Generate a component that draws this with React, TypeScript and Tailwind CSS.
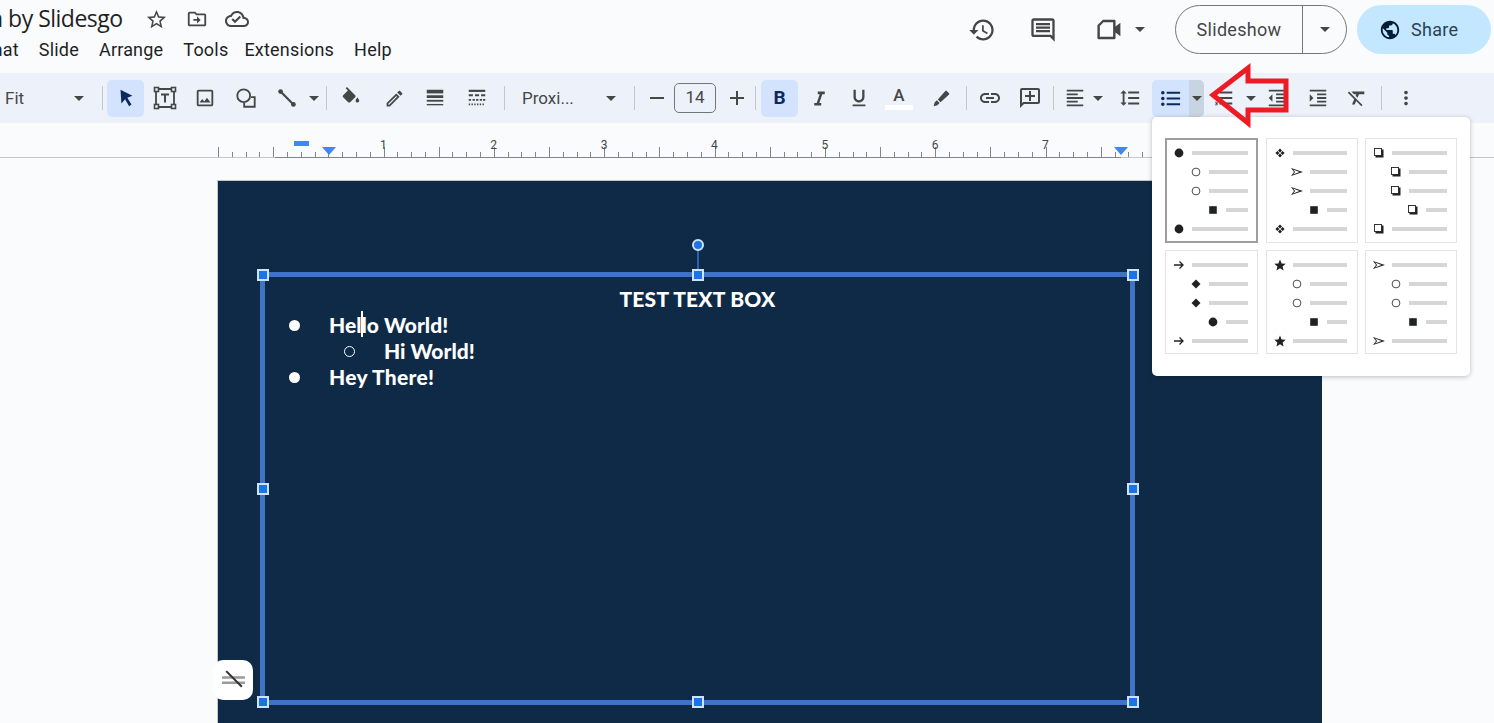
import { ReactNode } from 'react';

const ui = 'font-["Roboto",sans-serif]';

function Icon({ d, size = 22, className = '' }: { d: string; size?: number; className?: string }) {
  return (
    <svg viewBox="0 0 24 24" width={size} height={size} fill="currentColor" className={className}>
      <path d={d} />
    </svg>
  );
}

function Caret() {
  return <div className="w-0 h-0 border-l-[5px] border-r-[5px] border-t-[5px] border-l-transparent border-r-transparent border-t-[#444746]" />;
}

function Sep() {
  return <div className="w-px h-6 bg-[#c7c7c7] shrink-0" />;
}

function Tool({ className, children }: { className: string; children: ReactNode }) {
  return <div className={`h-[37px] flex items-center justify-center shrink-0 text-[#444746] ${className}`}>{children}</div>;
}

const paths = {
  image: 'M19 5v14H5V5h14m0-2H5c-1.1 0-2 .9-2 2v14c0 1.1.9 2 2 2h14c1.1 0 2-.9 2-2V5c0-1.1-.9-2-2-2zm-4.86 8.86l-3 3.87L9 13.14 6 17h12l-3.86-5.14z',
  fill: 'M16.56 8.94L7.62 0 6.21 1.41l2.38 2.38-5.15 5.15c-.59.59-.59 1.54 0 2.12l5.5 5.5c.29.29.68.44 1.06.44s.77-.15 1.06-.44l5.5-5.5c.59-.58.59-1.53 0-2.12zM19 11.5s-2 2.17-2 3.5c0 1.1.9 2 2 2s2-.9 2-2c0-1.33-2-3.5-2-3.5z',
  pencil: 'M14.06 9.02l.92.92L5.92 19H5v-.92l9.06-9.06M17.66 3c-.25 0-.51.1-.7.29l-1.83 1.83 3.75 3.75 1.83-1.83c.39-.39.39-1.02 0-1.41l-2.34-2.34c-.2-.2-.45-.29-.71-.29zm-3.6 3.19L3 17.25V21h3.75L17.81 9.94l-3.75-3.75z',
  italic: 'M10 4v3h2.21l-3.42 10H6v3h8v-3h-2.21l3.42-10H18V4z',
  underline: 'M12 17c3.31 0 6-2.69 6-6V3h-2.5v8c0 1.93-1.57 3.5-3.5 3.5S8.5 12.93 8.5 11V3H6v8c0 3.31 2.69 6 6 6zm-7 2v2h14v-2H5z',
  highlight: 'M4 21l1-4 2.5-2.5 3 3L8 20l-4 1zM8.5 13.5l8-9c.6-.6 1.5-.6 2 0l2 2c.6.5.6 1.4 0 2l-9 8-3-3z',
  link: 'M3.9 12c0-1.71 1.39-3.1 3.1-3.1h4V7H7c-2.76 0-5 2.24-5 5s2.24 5 5 5h4v-1.9H7c-1.71 0-3.1-1.39-3.1-3.1zM8 13h8v-2H8v2zm9-6h-4v1.9h4c1.71 0 3.1 1.39 3.1 3.1s-1.39 3.1-3.1 3.1h-4V17h4c2.76 0 5-2.24 5-5s-2.24-5-5-5z',
  addComment: 'M2 4c0-1.1.9-2 2-2h16c1.1 0 2 .9 2 2v12c0 1.1-.9 2-2 2H6l-4 4V4zm2 0v13.17L5.17 16H20V4H4zm7 1h2v4h4v2h-4v4h-2v-4H7V9h4V5z',
  align: 'M15 15H3v2h12v-2zm0-8H3v2h12V7zM3 13h18v-2H3v2zm0 8h18v-2H3v2zM3 3v2h18V3H3z',
  spacing: 'M6 7h2.5L5 3.5 1.5 7H4v10H1.5L5 20.5 8.5 17H6V7zm4-2v2h12V5H10zm0 14h12v-2H10v2zm0-6h12v-2H10v2z',
  bullets: 'M4 10.2c-1 0-1.8.8-1.8 1.8s.8 1.8 1.8 1.8 1.8-.8 1.8-1.8-.8-1.8-1.8-1.8zm0-6c-1 0-1.8.8-1.8 1.8S3 7.8 4 7.8 5.8 7 5.8 6 5 4.2 4 4.2zm0 12c-1 0-1.8.8-1.8 1.8s.8 1.8 1.8 1.8 1.8-.8 1.8-1.8-.8-1.8-1.8-1.8zM8 19h14v-2H8v2zm0-6h14v-2H8v2zm0-8v2h14V5H8z',
  numbered: 'M2 17h2v.5H3v1h1v.5H2v1h3v-4H2v1zm1-9h1V4H2v1h1v3zm-1 3h1.8L2 13.1v.9h3v-1H3.2L5 10.9V10H2v1zm5-6v2h14V5H7zm0 14h14v-2H7v2zm0-6h14v-2H7v2z',
  outdent: 'M11 17h10v-2H11v2zm-8-5l4 4V8l-4 4zm0 9h18v-2H3v2zM3 3v2h18V3H3zm8 6h10V7H11v2zm0 4h10v-2H11v2z',
  indent: 'M3 21h18v-2H3v2zM3 8v8l4-4-4-4zm8 9h10v-2H11v2zM3 3v2h18V3H3zm8 6h10V7H11v2zm0 4h10v-2H11v2z',
  clear: 'M3.27 5L2 6.27l6.97 6.97L6.5 19h3l1.57-3.66L16.73 21 18 19.73 3.55 5.27 3.27 5zM6 5v.18L8.82 8h2.4l-.72 1.68 2.1 2.1L14.21 8H20V5H6z',
  dots: 'M12 8c1.1 0 2-.9 2-2s-.9-2-2-2-2 .9-2 2 .9 2 2 2zm0 2c-1.1 0-2 .9-2 2s.9 2 2 2 2-.9 2-2-.9-2-2-2zm0 6c-1.1 0-2 .9-2 2s.9 2 2 2 2-.9 2-2-.9-2-2-2z',
  history: 'M13 3c-4.97 0-9 4.03-9 9H1l3.89 3.89.07.14L9 12H6c0-3.87 3.13-7 7-7s7 3.13 7 7-3.13 7-7 7c-1.93 0-3.68-.79-4.94-2.06l-1.42 1.42C8.27 19.99 10.51 21 13 21c4.97 0 9-4.03 9-9s-4.03-9-9-9zm-1 5v5l4.28 2.54.72-1.21-3.5-2.08V8H12z',
  comment: 'M21.99 4c0-1.1-.89-2-1.99-2H4c-1.1 0-2 .9-2 2v12c0 1.1.9 2 2 2h14l4 4-.01-18zM20 4v13.17L18.83 16H4V4h16zM6 12h12v2H6zm0-3h12v2H6zm0-3h12v2H6z',
  video: 'M15 6v12H4V9l3-3h8m1-2H6.5L2 8.5V19c0 .55.45 1 1 1h13c.55 0 1-.45 1-1v-4.5l4 3V6.5l-4 3V5c0-.55-.45-1-1-1z',
  globe: 'M12 2C6.48 2 2 6.48 2 12s4.48 10 10 10 10-4.48 10-10S17.52 2 12 2zm-1 17.93c-3.95-.49-7-3.85-7-7.93 0-.62.08-1.21.21-1.79L9 15v1c0 1.1.9 2 2 2v1.93zm6.9-2.54c-.26-.81-1-1.39-1.9-1.39h-1v-3c0-.55-.45-1-1-1H8v-2h2c.55 0 1-.45 1-1V7h2c1.1 0 2-.9 2-2v-.41c2.93 1.19 5 4.06 5 7.41 0 2.08-.8 3.97-2.1 5.39z',
  star: 'M22 9.24l-7.19-.62L12 2 9.19 8.63 2 9.24l5.46 4.73L5.82 21 12 17.27 18.18 21l-1.63-7.03L22 9.24zM12 15.4l-3.76 2.27 1-4.28-3.32-2.88 4.38-.38L12 6.1l1.71 4.04 4.38.38-3.32 2.88 1 4.28L12 15.4z',
  move: 'M20 6h-8l-2-2H4c-1.1 0-2 .9-2 2v12c0 1.1.9 2 2 2h16c1.1 0 2-.9 2-2V8c0-1.1-.9-2-2-2zm0 12H4V6h5.17l2 2H20v10zm-8-1v-3H8v-2h4V9l4 4-4 4z',
  cloud: 'M19.35 10.04C18.67 6.59 15.64 4 12 4 9.11 4 6.6 5.64 5.35 8.04 2.34 8.36 0 10.91 0 14c0 3.31 2.69 6 6 6h13c2.76 0 5-2.24 5-5 0-2.64-2.05-4.78-4.65-4.96zM19 18H6c-2.21 0-4-1.79-4-4 0-2.05 1.53-3.76 3.56-3.97l1.07-.11.5-.95C8.08 7.14 9.94 6 12 6c2.62 0 4.88 1.86 5.39 4.43l.3 1.5 1.53.11c1.56.1 2.78 1.41 2.78 2.96 0 1.65-1.35 3-3 3zm-9-1.82l-3.5-3.5 1.41-1.41L10 13.36l4.6-4.6 1.41 1.41z',
};

function Cursor() {
  return (
    <svg viewBox="0 0 24 24" width="22" height="22" className="text-[#0b2a5b]" fill="currentColor">
      <path d="M6 3l13 6.5-5.6 2.1L18 19l-2.6 2-4.4-7.6L7 18z" />
    </svg>
  );
}

function TextBoxIcon() {
  return (
    <svg viewBox="0 0 24 24" width="24" height="24" fill="none" stroke="currentColor" strokeWidth="1.6">
      <path d="M5 3h14M5 21h14M3 5v14M21 5v14" strokeWidth="1.8" />
      <rect x="1.5" y="1.5" width="4" height="4" fill="#edf2fa" />
      <rect x="18.5" y="1.5" width="4" height="4" fill="#edf2fa" />
      <rect x="1.5" y="18.5" width="4" height="4" fill="#edf2fa" />
      <rect x="18.5" y="18.5" width="4" height="4" fill="#edf2fa" />
      <path d="M8 8.5h8M12 8.5v8" strokeWidth="2" />
    </svg>
  );
}

function ShapeIcon() {
  return (
    <svg viewBox="0 0 24 24" width="22" height="22" fill="none" stroke="currentColor" strokeWidth="2">
      <circle cx="9.5" cy="9.5" r="7" />
      <path d="M17.5 11H21.5V21.5H10V17.5" />
    </svg>
  );
}

function LineIcon() {
  return (
    <svg viewBox="0 0 24 24" width="22" height="22" fill="currentColor">
      <path d="M5 5l14 14" stroke="currentColor" strokeWidth="2.4" />
      <circle cx="5" cy="5" r="2.6" />
      <circle cx="19" cy="19" r="2.6" />
    </svg>
  );
}

function WeightIcon() {
  return (
    <svg viewBox="0 0 24 24" width="22" height="22" fill="currentColor">
      <rect x="3" y="3" width="18" height="4" />
      <rect x="3" y="9" width="18" height="3" />
      <rect x="3" y="14" width="18" height="2" />
      <rect x="3" y="18.5" width="18" height="1.5" />
    </svg>
  );
}

function DashIcon() {
  return (
    <svg viewBox="0 0 24 24" width="22" height="22" fill="currentColor">
      <rect x="3" y="3" width="18" height="2.4" />
      <path d="M3 8h4.5v2H3zM9.8 8h4.5v2H9.8zM16.5 8H21v2h-4.5z" />
      <path d="M3 13h2.5v2H3zM7.2 13h2.5v2H7.2zM11 13h2.5v2H11zM15 13h2.5v2H15zM18.5 13H21v2h-2.5z" />
      <path d="M3 18h1.5v2H3zM6 18h1.5v2H6zM9 18h1.5v2H9zM12 18h1.5v2H12zM15 18h1.5v2H15zM18 18h1.5v2H18z" />
    </svg>
  );
}

function Ruler() {
  const inch = 110.35;
  const start = 218;
  const zero = 273;
  const ticks = Array.from({ length: 74 }, (_, i) => i);
  return (
    <svg width="1494" height="35" className="block">
      <path d="M0 34.5H1494" stroke="#c4c7c5" />
      <path d="M275 34.5H1121" stroke="#80868b" />
      {ticks.map((i) => {
        const x = Math.round(start + (i * inch) / 8) + 0.5;
        const tall = i % 4 === 0;
        return <path key={i} d={`M${x} ${tall ? 24 : 29}V34`} stroke="#80868b" />;
      })}
      {[1, 2, 3, 4, 5, 6, 7].map((n) => (
        <text key={n} x={zero + n * inch} y="26" textAnchor="middle" fontSize="12" fill="#444746" fontFamily="Roboto, sans-serif">
          {n}
        </text>
      ))}
      <rect x="294" y="18" width="15" height="5" fill="#4285f4" />
      <path d="M322 24h14l-7 8zM1114 24h14l-7 8z" fill="#4285f4" />
    </svg>
  );
}

type Mark = 'disc' | 'ring' | 'square' | 'clover' | 'dart' | 'box' | 'arrow' | 'diamond' | 'star';

function Bullet({ kind }: { kind: Mark }) {
  const c = '#202124';
  return (
    <svg viewBox="0 0 12 12" width="12" height="12" className="shrink-0">
      {kind === 'disc' && <circle cx="6" cy="6" r="4.4" fill={c} />}
      {kind === 'ring' && <circle cx="6" cy="6" r="3.9" fill="#fff" stroke={c} strokeWidth="0.8" />}
      {kind === 'square' && <rect x="2.2" y="2.2" width="7.6" height="7.6" fill={c} />}
      {kind === 'clover' && (
        <path d="M6 1.5l2 2-2 2-2-2zM6 6.5l2 2-2 2-2-2zM3.4 4l2 2-2 2-2-2zM8.6 4l2 2-2 2-2-2z" fill={c} />
      )}
      {kind === 'dart' && <path d="M0 2l12 4-12 4 3-4zM2 3.5L4.2 6 2 8.5 8.5 6z" fill={c} fillRule="evenodd" />}
      {kind === 'box' && (
        <>
          <rect x="2.5" y="2.5" width="8" height="8" fill={c} />
          <rect x="1.5" y="1.5" width="7" height="7" fill="#fff" stroke={c} strokeWidth="0.9" />
        </>
      )}
      {kind === 'arrow' && <path d="M1 6h9M6.5 2.5L10 6l-3.5 3.5" fill="none" stroke={c} strokeWidth="1.3" />}
      {kind === 'diamond' && <path d="M6 1.5L10.5 6 6 10.5 1.5 6z" fill={c} />}
      {kind === 'star' && <path d="M6 .6l1.6 3.8 4.1.3-3.1 2.7 1 4L6 9.3l-3.6 2.1 1-4L.3 4.7l4.1-.3z" fill={c} />}
    </svg>
  );
}

function ListRow({ kind, level }: { kind: Mark; level: 0 | 1 | 2 }) {
  const pad = level === 0 ? 'pl-[7px]' : level === 1 ? 'pl-[24px]' : 'pl-[41px]';
  return (
    <div className={`h-[19.2px] flex items-center gap-[7px] ${pad}`}>
      <Bullet kind={kind} />
      <div className="h-[4px] flex-1 bg-[#d6d6d6]" />
    </div>
  );
}

function Preset({ marks, selected }: { marks: [Mark, Mark, Mark]; selected?: boolean }) {
  return (
    <div className={`pt-[4px] pr-[9.5px] border ${selected ? 'border-[#9e9e9e] shadow-[inset_0_0_0_1px_#9e9e9e]' : 'border-[#e3e3e3]'}`}>
      <ListRow kind={marks[0]} level={0} />
      <ListRow kind={marks[1]} level={1} />
      <ListRow kind={marks[1]} level={1} />
      <ListRow kind={marks[2]} level={2} />
      <ListRow kind={marks[0]} level={0} />
    </div>
  );
}

function Handle({ className }: { className: string }) {
  return <div className={`absolute w-[12px] h-[12px] bg-[#1a73e8] border-2 border-[#cfe2fb] ${className}`} />;
}

export default function App() {
  return (
    <div className={`relative w-[1494px] h-[723px] overflow-hidden bg-[#f9fbfd] ${ui}`}>
      {/* Title bar */}
      <div className="h-[73px] flex justify-between">
        <div className="overflow-hidden">
          <div className="flex items-center h-[38px] -ml-[11px]">
            <span className="mb-[2px] text-[23px] text-[#1f1f1f] font-['Open_Sans',sans-serif] tracking-[-0.5px] whitespace-nowrap">n by Slidesgo</span>
            <Icon d={paths.star} size={23} className="ml-[22px] text-[#444746]" />
            <Icon d={paths.move} size={22} className="ml-[18px] text-[#444746]" />
            <Icon d={paths.cloud} size={24} className="ml-[17px] text-[#444746]" />
          </div>
          <div className="flex items-center gap-[20px] mt-[1px] -ml-[40px] text-[18px] tracking-[0.2px] text-[#1f1f1f] leading-[22px]">
            <span>Format</span>
            <span>Slide</span>
            <span>Arrange</span>
            <span>Tools</span>
            <span className="-ml-[4px]">Extensions</span>
            <span>Help</span>
          </div>
        </div>
        <div className="flex items-start pt-[5px] pr-[3px]">
          <div className="flex items-center h-[49px] text-[#444746]">
            <Icon d={paths.history} size={28} />
            <Icon d={paths.comment} size={28} className="ml-[33px]" />
            <Icon d={paths.video} size={29} className="ml-[38px]" />
            <div className="ml-[11px]"><Caret /></div>
          </div>
          <div className="ml-[30px] w-[172px] h-[49px] rounded-full border border-[#747775] flex items-center">
            <div className="w-[127px] h-full flex items-center justify-center border-r border-[#747775] text-[18px] tracking-[0.3px] text-[#444746]">Slideshow</div>
            <div className="flex-1 flex justify-center"><Caret /></div>
          </div>
          <div className="ml-[10px] w-[134px] h-[49px] rounded-full bg-[#c2e7ff] flex items-center pl-[22px] gap-[10px] text-[#001d35]">
            <Icon d={paths.globe} size={22} />
            <span className="text-[18px] tracking-[0.3px] text-[#2a4256]">Share</span>
          </div>
        </div>
      </div>

      {/* Toolbar */}
      <div className="h-[50px] bg-[#edf2fa] flex items-center">
        <div className="w-[102px] shrink-0 flex items-center pl-[5px] text-[17px] text-[#444746]">
          <span className="w-[69px] pt-[1px]">Fit</span>
          <Caret />
        </div>
        <Sep />
        <Tool className="ml-[4px] w-[37px] rounded-[5px] bg-[#d3e3fd]"><Cursor /></Tool>
        <Tool className="w-[41px]"><TextBoxIcon /></Tool>
        <Tool className="w-[40px]"><Icon d={paths.image} /></Tool>
        <Tool className="w-[41px]"><ShapeIcon /></Tool>
        <Tool className="w-[41px]"><LineIcon /></Tool>
        <Tool className="w-[13px]"><Caret /></Tool>
        <div className="ml-[6px]"><Sep /></div>
        <Tool className="w-[48px]"><Icon d={paths.fill} /></Tool>
        <Tool className="w-[39px]"><Icon d={paths.pencil} size={21} /></Tool>
        <Tool className="w-[42px]"><WeightIcon /></Tool>
        <Tool className="w-[42px]"><DashIcon /></Tool>
        <div className="ml-[6px]"><Sep /></div>
        <div className="w-[129px] shrink-0 flex items-center pl-[17px] text-[17px] text-[#444746]">
          <span className="w-[84px] pt-[1px]">Proxi...</span>
          <Caret />
        </div>
        <Sep />
        <Tool className="w-[39px] pl-[5px]"><div className="w-[14px] h-[2px] bg-[#444746]" /></Tool>
        <div className="w-[42px] h-[30px] shrink-0 rounded-[5px] border border-[#747775] flex items-center justify-center text-[17px] text-[#444746]">14</div>
        <Tool className="w-[39px] pl-[3px]"><div className="relative w-[14px] h-[14px]"><div className="absolute top-[6px] left-0 w-[14px] h-[2px] bg-[#444746]" /><div className="absolute left-[6px] top-0 h-[14px] w-[2px] bg-[#444746]" /></div></Tool>
        <Sep />
        <Tool className="ml-[5px] w-[37px] rounded-[5px] bg-[#d3e3fd] text-[19px] font-bold !text-[#0b2a5b]">B</Tool>
        <Tool className="w-[42px]"><Icon d={paths.italic} size={21} /></Tool>
        <Tool className="w-[38px]"><Icon d={paths.underline} /></Tool>
        <Tool className="w-[42px]">
          <div className="flex flex-col items-center leading-none">
            <span className="text-[17px] leading-[17px] font-medium">A</span>
            <div className="w-[28px] h-[5px] bg-white mt-[1px]" />
          </div>
        </Tool>
        <Tool className="w-[42px]"><Icon d={paths.highlight} size={22} /></Tool>
        <div className="ml-[4px]"><Sep /></div>
        <Tool className="w-[46px]"><Icon d={paths.link} size={24} /></Tool>
        <Tool className="w-[34px]"><Icon d={paths.addComment} size={24} /></Tool>
        <div className="ml-[6px]"><Sep /></div>
        <Tool className="w-[37px] pl-[5px]"><Icon d={paths.align} /></Tool>
        <Tool className="w-[14px]"><Caret /></Tool>
        <Tool className="w-[47px] pl-[3px]"><Icon d={paths.spacing} /></Tool>
        <div className="w-[52px] h-[37px] shrink-0 flex rounded-[5px] overflow-hidden bg-[#d3e3fd]">
          <div className="w-[37px] flex items-center justify-center text-[#0b2a5b]"><Icon d={paths.bullets} size={23} /></div>
          <div className="flex-1 bg-[#c9d4e3] flex items-center justify-center"><Caret /></div>
        </div>
        <Tool className="w-[40px]"><Icon d={paths.numbered} /></Tool>
        <Tool className="w-[13px]"><Caret /></Tool>
        <Tool className="w-[40px]"><Icon d={paths.outdent} /></Tool>
        <Tool className="w-[41px]"><Icon d={paths.indent} /></Tool>
        <Tool className="w-[38px]"><Icon d={paths.clear} /></Tool>
        <div className="ml-[5px]"><Sep /></div>
        <Tool className="w-[48px]"><Icon d={paths.dots} /></Tool>
      </div>

      <Ruler />

      {/* Slide */}
      <div className="mt-[22px] ml-[217px] w-[1105px] h-[621px] bg-[#0f2a47] border-t border-l border-[#c4c7c5] pl-[42px] pt-[91px] font-['Lato',sans-serif] font-black text-white text-[21px] leading-[26px]">
        <div className="relative w-[875px] h-[433px] border-[5px] border-[#3f74c4] pl-[64px]">
          <div className="h-[9px]" />
          <div className="-ml-[64px] text-center tracking-[0.2px]">TEST TEXT BOX</div>
          <div className="relative whitespace-nowrap">
            <div className="absolute -left-[40px] top-[8px] w-[11px] h-[11px] rounded-full bg-white" />
            Hel<span className="relative"><span className="absolute left-[-1px] -top-[1px] w-[2px] h-[26px] bg-white" /></span>lo World!
          </div>
          <div className="relative pl-[55px] whitespace-nowrap">
            <div className="absolute left-[15px] top-[8px] w-[11px] h-[11px] rounded-full border border-white" />
            Hi World!
          </div>
          <div className="relative whitespace-nowrap tracking-[0.3px]">
            <div className="absolute -left-[40px] top-[8px] w-[11px] h-[11px] rounded-full bg-white" />
            Hey There!
          </div>

          <div className="absolute left-1/2 -top-[30px] -ml-px w-[2px] h-[25px] bg-[#2a62b0]" />
          <div className="absolute left-1/2 -top-[38px] -ml-[6px] w-[12px] h-[12px] rounded-full bg-[#1a73e8] border-2 border-[#cfe2fb]" />
          <Handle className="-left-[8px] -top-[8px]" />
          <Handle className="left-1/2 -ml-[6px] -top-[8px]" />
          <Handle className="-right-[9px] -top-[8px]" />
          <Handle className="-left-[8px] top-1/2 -mt-[6px]" />
          <Handle className="-right-[9px] top-1/2 -mt-[6px]" />
          <Handle className="-left-[8px] -bottom-[8px]" />
          <Handle className="left-1/2 -ml-[6px] -bottom-[8px]" />
          <Handle className="-right-[9px] -bottom-[8px]" />

          <div className="absolute -left-[52px] bottom-0 w-[40px] h-[40px] rounded-[10px] bg-white flex items-center justify-center">
            <svg viewBox="0 0 24 24" width="25" height="25">
              <path d="M1 8h22v2.4H1zM1 13h22v2.4H1z" fill="#9a9a9a" />
              <path d="M5 3l15 15" stroke="#333" strokeWidth="2" />
            </svg>
          </div>
        </div>
      </div>

      {/* Bullet preset menu */}
      <div className="absolute left-[1152px] top-[117px] w-[318px] h-[259px] bg-white rounded-[5px] shadow-[0_1px_5px_rgba(0,0,0,0.25)] pl-[13px] pt-[21px] grid grid-cols-[93px_92px_92px] grid-rows-[105px_104px] gap-x-[7.5px] gap-y-[7px]">
        <Preset selected marks={['disc', 'ring', 'square']} />
        <Preset marks={['clover', 'dart', 'square']} />
        <Preset marks={['box', 'box', 'box']} />
        <Preset marks={['arrow', 'diamond', 'disc']} />
        <Preset marks={['star', 'ring', 'square']} />
        <Preset marks={['dart', 'ring', 'square']} />
      </div>

      {/* Red annotation arrow */}
      <svg className="absolute left-[1205px] top-[60px]" width="90" height="70" fill="none">
        <path d="M8 35L43 8V21H81V50H43V63Z" stroke="#ed1c24" strokeWidth="5" />
      </svg>
    </div>
  );
}
